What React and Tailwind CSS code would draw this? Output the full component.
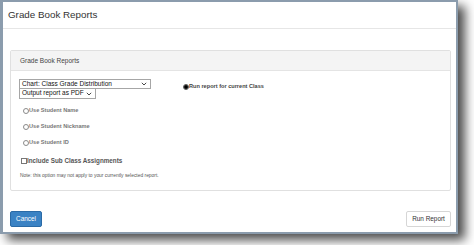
import React from 'react'

const Chevron = () => (
  <svg width="6" height="4" viewBox="0 0 6 4" className="shrink-0">
    <path d="M0.8 0.8 L3 3 L5.2 0.8" fill="none" stroke="#333" strokeWidth="0.9" />
  </svg>
)

const FakeSelect = ({ label, width }) => (
  <div
    className={`flex h-[10px] items-center justify-between border border-[#a6a6a6] bg-white pl-[2px] pr-[3px] text-[6.5px] leading-none text-[#111] ${width}`}
  >
    <span>{label}</span>
    <Chevron />
  </div>
)

const Radio = ({ checked, label, dark }) => (
  <div className="flex items-center">
    <span
      className={`flex h-[6px] w-[6px] shrink-0 items-center justify-center rounded-full border ${
        checked ? 'border-[#555] bg-[#e8e8e8]' : 'border-[#8a8a8a] bg-white'
      }`}
    >
      {checked && <span className="h-[3.5px] w-[3.5px] rounded-full bg-black" />}
    </span>
    <span className={`text-[5.6px] font-bold leading-none ${dark ? 'text-[#444]' : 'text-[#777]'}`}>{label}</span>
  </div>
)

export default function App() {
  const opts = ['Use Student Name', 'Use Student Nickname', 'Use Student ID']

  return (
    <div className="h-[245px] w-[474px] overflow-hidden bg-white" style={{ fontFamily: '"Liberation Sans", Arial, sans-serif' }}>
      <div className="flex h-[234px] w-[458px] flex-col border-b-2 border-l-[3px] border-r-2 border-t-2 border-[#8b9cad] bg-white shadow-[7px_6px_10px_rgba(0,0,0,0.7)]">
        <div className="flex h-[27px] shrink-0 items-center border-b border-[#e6e6e6] pl-[5px] text-[9.8px] text-[#333]">
          Grade Book Reports
        </div>

        <div className="px-[7px] pr-[5px] pt-[21px]">
          <div className="rounded-[2px] border border-[#e0e0e0]">
            <div className="flex h-[20px] items-center border-b border-[#e4e4e4] bg-[#f4f4f4] pl-[9px] text-[6.5px] text-[#444]">
              Grade Book Reports
            </div>
            <div className="flex px-[8px] pb-[9px] pt-[8px]">
              <div className="flex w-[164px] flex-col">
                <FakeSelect label="Chart: Class Grade Distribution" width="w-[132px]" />
                <FakeSelect label="Output report as PDF" width="w-[77px] border-t-0" />
                <div className="mt-[4px] flex flex-col pl-[4px]">
                  {opts.map((o) => (
                    <div key={o} className="flex h-[16px] items-center">
                      <Radio label={o} />
                    </div>
                  ))}
                </div>
                <div className="mt-[2px] flex h-[16px] items-center pl-[2px]">
                  <span className="h-[6px] w-[6px] shrink-0 border border-[#777] bg-white" />
                  <span className="text-[6.3px] font-bold leading-none text-[#555]">Include Sub Class Assignments</span>
                </div>
                <div className="mt-[2px] flex h-[10px] items-center pl-[1px] text-[4.9px] leading-none text-[#555]">
                  Note: this option may not apply to your currently selected report.
                </div>
              </div>
              <div className="pt-[5px]">
                <Radio checked dark label="Run report for current Class" />
              </div>
            </div>
          </div>
        </div>

        <div className="mt-auto flex items-center justify-between pb-[5px] pl-[7px] pr-[5px]">
          <button className="flex h-[16px] w-[32px] items-center justify-center rounded-[2px] border border-[#2a6aa6] bg-[#3a82c4] text-[6.4px] text-white">
            Cancel
          </button>
          <button className="flex h-[16px] w-[45px] items-center justify-center rounded-[2px] border border-[#d6d6d6] bg-white text-[6.4px] text-[#333]">
            Run Report
          </button>
        </div>
      </div>
    </div>
  )
}
